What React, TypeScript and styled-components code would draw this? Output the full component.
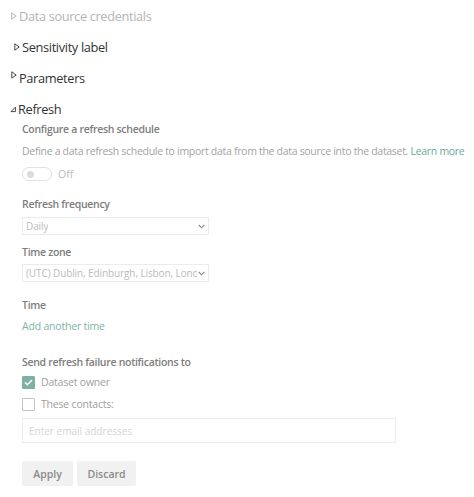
import React, { useState } from 'react'
import styled, { createGlobalStyle } from 'styled-components'

const GlobalStyle = createGlobalStyle`
	body {
		margin: 0;
		background: #ffffff;
		font-family: 'Open Sans', 'Noto Sans', sans-serif;
	}
`

const Page = styled.div`
	width: 474px;
	height: 497px;
	overflow: hidden;
`

const SectionHeader = styled.div<{ $muted?: boolean; $indent: number }>`
	display: flex;
	align-items: center;
	height: 31px;
	padding-left: ${(p) => p.$indent}px;
	font-size: 12.8px;
	color: ${(p) => (p.$muted ? '#b4b4b4' : '#333333')};
	letter-spacing: -0.35px;
`

const Arrow = styled.svg<{ $lift?: number }>`
	width: 6px;
	height: 8px;
	margin-right: 2px;
	flex-shrink: 0;
	position: relative;
	top: ${(p) => p.$lift ?? 0}px;
`

const Body = styled.div`
	padding-left: 22px;
	display: flex;
	flex-direction: column;
`

const Title = styled.div<{ $top?: number }>`
	font-size: 10.5px;
	font-weight: 600;
	color: #7d7d7d;
	margin-top: ${(p) => p.$top ?? 0}px;
	height: 15px;
	line-height: 15px;
	letter-spacing: -0.3px;
	white-space: nowrap;
`

const Description = styled.div`
	font-size: 10.5px;
	color: #a3a3a3;
	margin-top: 7px;
	line-height: 15px;
	white-space: nowrap;
	letter-spacing: -0.3px;
`

const Link = styled.span`
	color: #6aa89a;
`

const ToggleRow = styled.div`
	display: flex;
	align-items: center;
	gap: 6px;
	margin-top: 8px;
	font-size: 10.5px;
	color: #bdbdbd;
`

const Toggle = styled.div`
	width: 30px;
	height: 14px;
	border: 1px solid #e2e2e2;
	border-radius: 8px;
	box-sizing: border-box;
	display: flex;
	align-items: center;
	padding-left: 4px;
`

const Knob = styled.div`
	width: 7px;
	height: 7px;
	border-radius: 50%;
	background: #dcdcdc;
`

const Select = styled.div<{ $top?: number }>`
	width: 187px;
	height: 18px;
	box-sizing: border-box;
	border: 1px solid #ececec;
	margin-top: ${(p) => p.$top ?? 5}px;
	display: flex;
	align-items: center;
	justify-content: space-between;
	padding: 0 3px 0 3px;
	font-size: 10px;
	color: #bbbbbb;
	overflow: hidden;
`

const SelectText = styled.span`
	white-space: nowrap;
	overflow: hidden;
	letter-spacing: -0.1px;
`

const Chevron = styled.svg`
	width: 7px;
	height: 5px;
	flex-shrink: 0;
	margin-left: 1px;
`

const AddLink = styled.div`
	font-size: 10.5px;
	color: #7db3a6;
	margin-top: 6px;
	line-height: 15px;
	letter-spacing: -0.2px;
`

const CheckRow = styled.label<{ $top: number }>`
	display: flex;
	align-items: center;
	gap: 6px;
	margin-top: ${(p) => p.$top}px;
	font-size: 10.5px;
	color: #a0a0a0;
	height: 14px;
	letter-spacing: -0.2px;
`

const Box = styled.div<{ $checked: boolean }>`
	width: 13px;
	height: 13px;
	box-sizing: border-box;
	border: 1px solid ${(p) => (p.$checked ? '#7fb0a5' : '#c4c4c4')};
	background: ${(p) => (p.$checked ? '#7fb0a5' : '#ffffff')};
	border-radius: 1px;
	display: flex;
	align-items: center;
	justify-content: center;
`

const EmailInput = styled.input`
	width: 374px;
	height: 25px;
	box-sizing: border-box;
	border: 1px solid #ececec;
	margin-top: 7px;
	padding: 0 6px;
	font-family: inherit;
	font-size: 10px;
	outline: none;
	&::placeholder {
		color: #d4d4d4;
	}
`

const Buttons = styled.div`
	display: flex;
	gap: 4px;
	margin-top: 18px;
`

const Button = styled.button<{ $width: number }>`
	width: ${(p) => p.$width}px;
	height: 25px;
	border: none;
	border-radius: 2px;
	background: #f1f1f1;
	color: #8a8a8a;
	font-family: inherit;
	font-size: 10.5px;
	font-weight: 600;
	padding: 0;
`

const RightArrow = ({ lift }: { lift?: number }) => (
	<Arrow viewBox="0 0 6 8" $lift={lift}>
		<path d="M0.8 0.8 L5.2 4 L0.8 7.2 Z" fill="none" stroke="currentColor" strokeWidth="0.9" />
	</Arrow>
)

const DownArrow = () => (
	<Arrow viewBox="0 0 6 8">
		<path d="M5.4 2.2 L5.4 6.6 L1 6.6 Z" fill="none" stroke="currentColor" strokeWidth="0.9" />
	</Arrow>
)

const ChevronDown = () => (
	<Chevron viewBox="0 0 7 5">
		<path d="M0.8 1 L3.5 3.8 L6.2 1" fill="none" stroke="#8a8a8a" strokeWidth="1.1" />
	</Chevron>
)

export default function App() {
	const [owner, setOwner] = useState(true)
	const [contacts, setContacts] = useState(false)

	return (
		<Page>
			<GlobalStyle />
			<SectionHeader $muted $indent={11}>
				<RightArrow />
				Data source credentials
			</SectionHeader>
			<SectionHeader $indent={14}>
				<RightArrow />
				Sensitivity label
			</SectionHeader>
			<SectionHeader $indent={11}>
				<RightArrow lift={-3} />
				Parameters
			</SectionHeader>
			<SectionHeader $indent={10}>
				<DownArrow />
				Refresh
			</SectionHeader>
			<Body>
				<Title $top={-2}>Configure a refresh schedule</Title>
				<Description>
					Define a data refresh schedule to import data from the data source into the dataset.{' '}
					<Link>Learn more</Link>
				</Description>
				<ToggleRow>
					<Toggle>
						<Knob />
					</Toggle>
					Off
				</ToggleRow>
				<Title $top={16}>Refresh frequency</Title>
				<Select>
					<SelectText>Daily</SelectText>
					<ChevronDown />
				</Select>
				<Title $top={10}>Time zone</Title>
				<Select $top={4}>
					<SelectText>(UTC) Dublin, Edinburgh, Lisbon, London</SelectText>
					<ChevronDown />
				</Select>
				<Title $top={16}>Time</Title>
				<AddLink>Add another time</AddLink>
				<Title $top={21}>Send refresh failure notifications to</Title>
				<CheckRow $top={5} onClick={() => setOwner(!owner)}>
					<Box $checked={owner}>
						{owner && (
							<svg width="9" height="7" viewBox="0 0 9 7">
								<path d="M1 3.6 L3.4 5.8 L8 1" fill="none" stroke="#ffffff" strokeWidth="1.4" />
							</svg>
						)}
					</Box>
					Dataset owner
				</CheckRow>
				<CheckRow $top={8} onClick={() => setContacts(!contacts)}>
					<Box $checked={contacts} />
					These contacts:
				</CheckRow>
				<EmailInput placeholder="Enter email addresses" />
				<Buttons>
					<Button $width={51}>Apply</Button>
					<Button $width={59}>Discard</Button>
				</Buttons>
			</Body>
		</Page>
	)
}
